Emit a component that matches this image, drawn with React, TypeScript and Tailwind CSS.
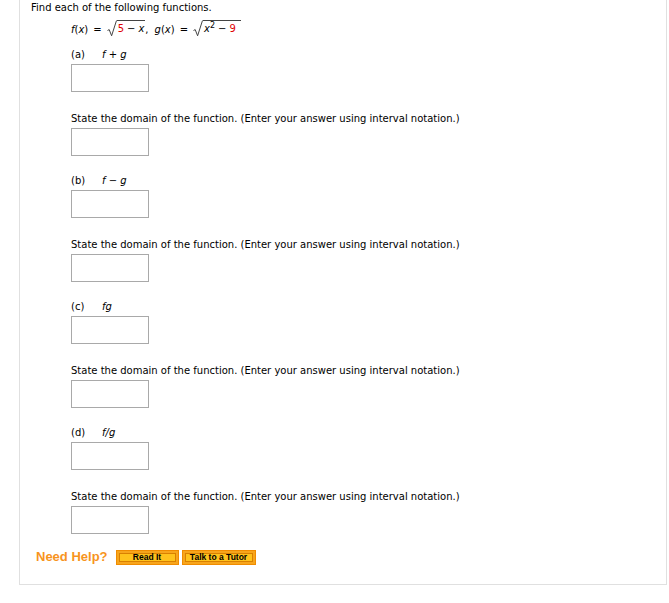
import React from "react";

const Box = () => <div className="w-[78px] h-[28px] border border-[#a9a9a9] bg-white" />;

const State = () => (
  <>
    <div className="mt-[21px] h-[12px] leading-[12px]">
      State the domain of the function. (Enter your answer using interval notation.)
    </div>
    <div className="mt-[3px]"><Box /></div>
  </>
);

const Part = ({ label, expr, first }: { label: string; expr: React.ReactNode; first?: boolean }) => (
  <>
    <div className={(first ? "mt-[11px]" : "mt-[19px]") + " h-[12px] leading-[12px] flex"}>
      <span className="w-[31px]">{label}</span>
      <span className="italic">{expr}</span>
    </div>
    <div className="mt-[3px]"><Box /></div>
    <State />
  </>
);

const Radical = () => (
  <svg width="10" height="17" viewBox="0 0 10 17" className="block shrink-0">
    <path d="M0.5 10.5 L2.2 9.6 L4.6 15.8 L9.5 0.5" fill="none" stroke="#444" strokeWidth="1" />
  </svg>
);

export default function App() {
  return (
    <div className="bg-white w-[669px] h-[603px] text-black" style={{ fontFamily: '"DejaVu Sans", Verdana, sans-serif' }}>
      <div className="ml-[19px] w-[648px] h-[585px] border-l border-r border-b border-[#e0e0e0] text-[10px]">
        <div className="pl-[11px] pt-[2px] h-[12px] leading-[12px]">Find each of the following functions.</div>
        <div className="pl-[51px] mt-[8px] h-[18px] flex items-start">
          <span className="pt-[3px] leading-[14px] whitespace-pre">
            <span className="italic">f</span>(<span className="italic">x</span>)
          </span>
          <span className="pt-[3px] leading-[14px] mx-[5px]">=</span>
          <Radical />
          <span className="border-t border-[#444] pt-[1px] leading-[14px] pr-[1px] pl-[1px] whitespace-pre">
            <span className="text-[#e00000]">5</span><span className="mx-[3px]">−</span><span className="italic">x</span>
          </span>
          <span className="pt-[3px] leading-[14px]">,</span>
          <span className="pt-[3px] leading-[14px] ml-[6px] whitespace-pre">
            <span className="italic">g</span>(<span className="italic">x</span>)
          </span>
          <span className="pt-[3px] leading-[14px] mx-[5px]">=</span>
          <Radical />
          <span className="border-t border-[#444] pt-[1px] leading-[14px] pl-[1px] pr-[5px] whitespace-pre">
            <span className="italic">x</span><span className="text-[8px] relative top-[-4px]">2</span><span className="mx-[3px]">−</span><span className="text-[#e00000]">9</span>
          </span>
        </div>
        <div className="pl-[51px]">
          <Part first label="(a)" expr={<>f + g</>} />
          <Part label="(b)" expr={<>f − g</>} />
          <Part label="(c)" expr={<>fg</>} />
          <Part label="(d)" expr={<>f/g</>} />
        </div>
        <div className="mt-[15px] pl-[16px] flex items-center" style={{ fontFamily: '"Liberation Sans", Arial, sans-serif' }}>
          <span className="text-[13px] font-bold text-[#f7941d] leading-[16px]">Need Help?</span>
          <div className="ml-[8px] flex gap-[3px]">
            <div className="border border-[#f08c00] bg-[#f7a51c] p-[2px]">
              <div className="w-[57px] h-[9px] border border-[#d98000] bg-[#ffc21c] flex items-center justify-center text-[8.5px] font-bold leading-none">Read It</div>
            </div>
            <div className="border border-[#f08c00] bg-[#f7a51c] p-[2px]">
              <div className="w-[68px] h-[9px] border border-[#d98000] bg-[#ffc21c] flex items-center justify-center text-[8.5px] font-bold leading-none">Talk to a Tutor</div>
            </div>
          </div>
        </div>
      </div>
    </div>
  );
}
